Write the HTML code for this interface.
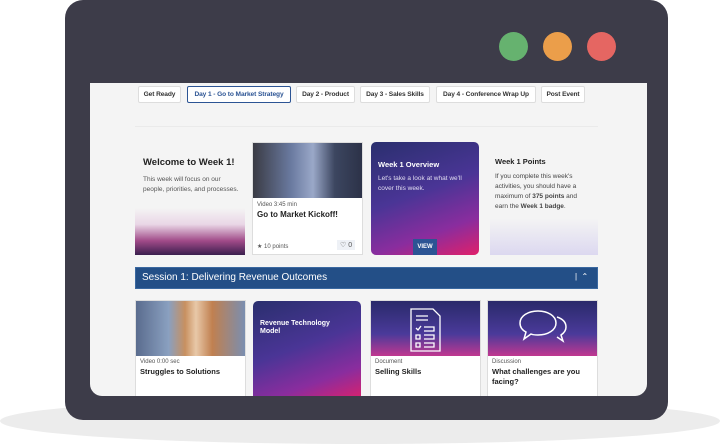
<!DOCTYPE html>
<html><head><style>
*{margin:0;padding:0;box-sizing:border-box}
body{width:720px;height:444px;background:#fff;position:relative;overflow:hidden;font-family:"Liberation Sans",sans-serif}
.shadow{position:absolute;left:0px;top:398px;width:720px;height:46px;border-radius:50%;background:#ececec}
.frame{position:absolute;left:65px;top:0;width:603px;height:420px;background:#3d3c49;border-radius:18px}
.dot{position:absolute;top:32px;width:29px;height:29px;border-radius:50%}
.screen{position:absolute;left:90px;top:83px;width:557px;height:313px;background:#f4f4f4;border-radius:0 0 12px 12px;overflow:hidden}
.tab{position:absolute;top:3px;height:17px;background:#fff;border:1px solid #ddd;font-size:6.6px;font-weight:bold;color:#333;line-height:15px;text-align:center;border-radius:2px;white-space:nowrap;overflow:hidden;letter-spacing:-0.1px}
.card{position:absolute;background:#fff;border:1px solid #ddd;overflow:hidden}
.grad{background:linear-gradient(160deg,#2a2f6e 0%,#4a3596 45%,#8a2d9e 75%,#e0206a 100%)}
.t{position:absolute;font-weight:bold;color:#222;white-space:nowrap}
.s{position:absolute;color:#555;white-space:nowrap}
</style></head><body>
<div class="shadow"></div>
<div class="frame">
<div class="dot" style="left:434px;background:#66b26f"></div>
<div class="dot" style="left:478px;background:#eb9e4a"></div>
<div class="dot" style="left:522px;background:#e56662"></div>
</div>
<div class="screen">
<div class="tab" style="left:48px;width:43px">Get Ready</div>
<div class="tab" style="left:97px;width:104px;border-color:#2c5494;color:#2c5494">Day 1 - Go to Market Strategy</div>
<div class="tab" style="left:206px;width:59px">Day 2 - Product</div>
<div class="tab" style="left:270px;width:70px">Day 3 - Sales Skills</div>
<div class="tab" style="left:346px;width:100px">Day 4 - Conference Wrap Up</div>
<div class="tab" style="left:451px;width:44px">Post Event</div>
<div style="position:absolute;left:45px;top:43px;width:463px;height:1px;background:#eaeaea"></div>

<div style="position:absolute;left:45px;top:125px;width:110px;height:47px;background:linear-gradient(180deg,#f4f4f4 0%,#e9d6e6 35%,#a04a88 70%,#3a1e4e 100%)"></div>
<div class="t" style="left:53px;top:74px;font-size:9.5px">Welcome to Week 1!</div>
<div class="s" style="left:53px;top:92px;font-size:6.5px;line-height:10px">This week will focus on our<br>people, priorities, and processes.</div>

<div class="card" style="left:162px;top:59px;width:111px;height:113px">
<div style="height:55px;background:linear-gradient(90deg,#3a3b44 0%,#6a7aa0 35%,#9aa8c8 55%,#3c4660 75%,#2c3248 100%)"></div>
<div class="s" style="left:4px;top:59px;font-size:6px">Video 3:45 min</div>
<div class="t" style="left:4px;top:67px;font-size:8px">Go to Market Kickoff!</div>
<div class="s" style="left:4px;top:100px;font-size:6px">★ 10 points</div>
<div class="s" style="left:84px;top:97px;font-size:7px;background:#eef1f6;padding:1px 3px">♡ 0</div>
</div>

<div class="grad" style="position:absolute;left:281px;top:59px;width:108px;height:113px;border-radius:5px">
<div style="position:absolute;left:7px;top:18px;font-size:7.5px;font-weight:bold;color:#fff">Week 1 Overview</div>
<div style="position:absolute;left:7px;top:32px;font-size:6.5px;color:#e0dcf0;line-height:10px;white-space:nowrap">Let's take a look at what we'll<br>cover this week.</div>
<div style="position:absolute;left:42px;top:97px;width:24px;height:16px;background:#2c5494;color:#fff;font-size:6px;font-weight:bold;text-align:center;line-height:16px">VIEW</div>
</div>

<div style="position:absolute;left:400px;top:135px;width:108px;height:37px;background:linear-gradient(180deg,#f4f4f4,#dcd8f0)"></div>
<div class="t" style="left:405px;top:74px;font-size:7.5px">Week 1 Points</div>
<div class="s" style="left:405px;top:89px;font-size:6.5px;line-height:10px;color:#444">If you complete this week's<br>activities, you should have a<br>maximum of <b>375 points</b> and<br>earn the <b>Week 1 badge</b>.</div>

<div style="position:absolute;left:45px;top:184px;width:463px;height:22px;background:#234f87;border:1px solid #3a68a0"></div>
<div style="position:absolute;left:52px;top:189px;font-size:10px;color:#fff;white-space:nowrap">Session 1: Delivering Revenue Outcomes</div>
<div style="position:absolute;left:485px;top:189px;font-size:8px;color:#fff">| &nbsp;⌃</div>

<div class="card" style="left:45px;top:217px;width:111px;height:100px">
<div style="height:55px;background:linear-gradient(90deg,#5a6c8e 0%,#8aa0c0 30%,#c89060 45%,#e8c8a8 55%,#c08050 70%,#7a8eb0 100%)"></div>
<div class="s" style="left:4px;top:58px;font-size:6px">Video 0:00 sec</div>
<div class="t" style="left:4px;top:66px;font-size:7.5px">Struggles to Solutions</div>
</div>
<div class="grad" style="position:absolute;left:163px;top:218px;width:108px;height:100px;border-radius:5px">
<div style="position:absolute;left:7px;top:19px;font-size:7px;font-weight:bold;color:#fff;line-height:8px">Revenue Technology<br>Model</div>
</div>
<div class="card" style="left:280px;top:217px;width:111px;height:100px">
<div style="height:55px;background:linear-gradient(180deg,#2a2a6a,#4a3a9a 60%,#c03890)"><svg width="111" height="55"><g fill="none" stroke="#fff" stroke-width="1.3"><path d="M40 8h22l7 7v35H40z"/><path d="M45 15h12M45 19h12M45 27l2 2 3-4M53 26h10v4H53M45 34h4v4h-4zM53 34h10v4H53M45 42h4v4h-4zM53 42h10v4H53"/></g></svg></div>
<div class="s" style="left:4px;top:58px;font-size:6px">Document</div>
<div class="t" style="left:4px;top:66px;font-size:7.5px">Selling Skills</div>
</div>
<div class="card" style="left:397px;top:217px;width:111px;height:100px">
<div style="height:55px;background:linear-gradient(180deg,#2a2a6a,#4a3a9a 60%,#c03890)"><svg width="111" height="55"><g fill="none" stroke="#fff" stroke-width="1.5"><path d="M50 10c-10 0-18 5-18 12 0 4 2 7 6 9l-2 7 7-5c2 1 5 1 7 1 10 0 18-5 18-12s-8-12-18-12z"/><path d="M69 16c6 2 9 5 9 10 0 3-2 6-5 8l2 6-6-4"/></g></svg></div>
<div class="s" style="left:4px;top:58px;font-size:6px">Discussion</div>
<div class="t" style="left:4px;top:66px;font-size:7.5px;line-height:10px">What challenges are you<br>facing?</div>
</div>
</div>
</body></html>
